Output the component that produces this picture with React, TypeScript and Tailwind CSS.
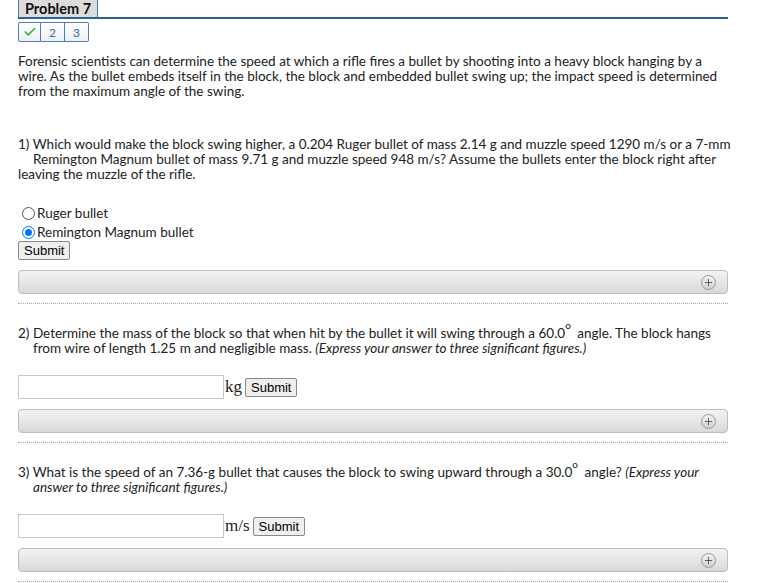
import { Check, Plus } from "lucide-react";

const body = "font-['Lato','Liberation_Sans',sans-serif] text-[13.5px] leading-[15px] text-[#222]";

const SubmitButton = () => (
  <button className="h-[19px] px-[5px] border border-[#888] rounded-[2px] bg-[#efefef] font-['Liberation_Sans',Arial,sans-serif] text-[13px] leading-[15px] text-black">
    Submit
  </button>
);

const HintBar = () => (
  <div className="mt-[10px] mb-[10px]">
    <div className="h-[24px] rounded-[4px] border border-[#bdbdbd] bg-gradient-to-b from-[#f3f3f3] to-[#d9d9d9] flex items-center justify-end pr-[11px]">
      <div className="w-[15px] h-[15px] rounded-full border border-[#999] bg-gradient-to-b from-[#f4f4f4] to-[#cfcfcf] flex items-center justify-center">
        <Plus size={11} strokeWidth={1.6} className="text-[#333]" />
      </div>
    </div>
    <div className="mt-[9px] border-t border-dotted border-[#aaa]" />
  </div>
);

const Deg = () => <sup className="text-[10px] leading-none align-[4px] mr-[3px]">o</sup>;

const AnswerRow = ({ unit }: { unit: string }) => (
  <div className="flex items-center h-[24px]">
    <input className="w-[206px] h-[24px] border border-[#c8c8c8] bg-white outline-none" />
    <span className="ml-[1px] mr-[3px] font-['Liberation_Serif','Times_New_Roman',serif] text-[17px] leading-[20px] text-[#222]">
      {unit}
    </span>
    <SubmitButton />
  </div>
);

export default function App() {
  return (
    <div className={`${body} bg-white min-h-[583px] pl-[18px] pr-[32px] whitespace-nowrap`}>
      <div className="flex border-b-2 border-[#2f6196]">
        <div className="h-[17px] px-[6px] bg-[#dcdcdc] border-x border-[#4a7ab0] font-bold text-[14.5px] leading-[17px] text-[#111]">
          Problem 7
        </div>
      </div>
      <div className="mt-[3px] flex">
        <div className="w-[23px] h-[20px] border border-[#4a7ebb] rounded-l-[2px] flex items-center justify-center bg-gradient-to-b from-white to-[#f0f0f0]">
          <Check size={14} strokeWidth={3} className="text-[#3cb44b]" />
        </div>
        <div className="w-[24px] h-[20px] border border-l-0 border-[#4a7ebb] flex items-center justify-center text-[#2d6db5] text-[12px] bg-gradient-to-b from-white to-[#f0f0f0]">
          2
        </div>
        <div className="w-[24px] h-[20px] border border-l-0 border-[#4a7ebb] rounded-r-[2px] flex items-center justify-center text-[#2d6db5] text-[12px] bg-gradient-to-b from-white to-[#f0f0f0]">
          3
        </div>
      </div>

      <p className="mt-[12px]">
        Forensic scientists can determine the speed at which a rifle fires a bullet by shooting into a heavy block hanging by a
        <br />
        wire. As the bullet embeds itself in the block, the block and embedded bullet swing up; the impact speed is determined
        <br />
        from the maximum angle of the swing.
      </p>

      <div className="mt-[38px]">
        <div>1) Which would make the block swing higher, a 0.204 Ruger bullet of mass 2.14 g and muzzle speed 1290 m/s or a 7-mm</div>
        <div className="pl-[15px]">Remington Magnum bullet of mass 9.71 g and muzzle speed 948 m/s? Assume the bullets enter the block right after</div>
        <div>leaving the muzzle of the rifle.</div>
      </div>

      <div className="mt-[24px] flex flex-col gap-[4px]">
        <label className="flex items-center">
          <span className="ml-[4px] w-[13px] h-[13px] rounded-full border border-[#555] bg-white" />
          <span className="ml-[2px]">Ruger bullet</span>
        </label>
        <label className="flex items-center">
          <span className="ml-[4px] w-[13px] h-[13px] rounded-full border-[1.5px] border-[#0075ff] bg-white flex items-center justify-center">
            <span className="w-[7px] h-[7px] rounded-full bg-[#0075ff]" />
          </span>
          <span className="ml-[2px]">Remington Magnum bullet</span>
        </label>
      </div>
      <div className="mt-[1px] flex">
        <SubmitButton />
      </div>

      <HintBar />

      <div className="mt-[21px]">
        <div>2) Determine the mass of the block so that when hit by the bullet it will swing through a 60.0<Deg /> angle. The block hangs</div>
        <div className="pl-[15px]">
          from wire of length 1.25 m and negligible mass. <i>(Express your answer to three significant figures.)</i>
        </div>
      </div>
      <div className="mt-[19px]">
        <AnswerRow unit="kg" />
      </div>

      <HintBar />

      <div className="mt-[21px]">
        <div>3) What is the speed of an 7.36-g bullet that causes the block to swing upward through a 30.0<Deg /> angle? <i>(Express your</i></div>
        <div className="pl-[15px]">
          <i>answer to three significant figures.)</i>
        </div>
      </div>
      <div className="mt-[19px]">
        <AnswerRow unit="m/s" />
      </div>

      <HintBar />
    </div>
  );
}
